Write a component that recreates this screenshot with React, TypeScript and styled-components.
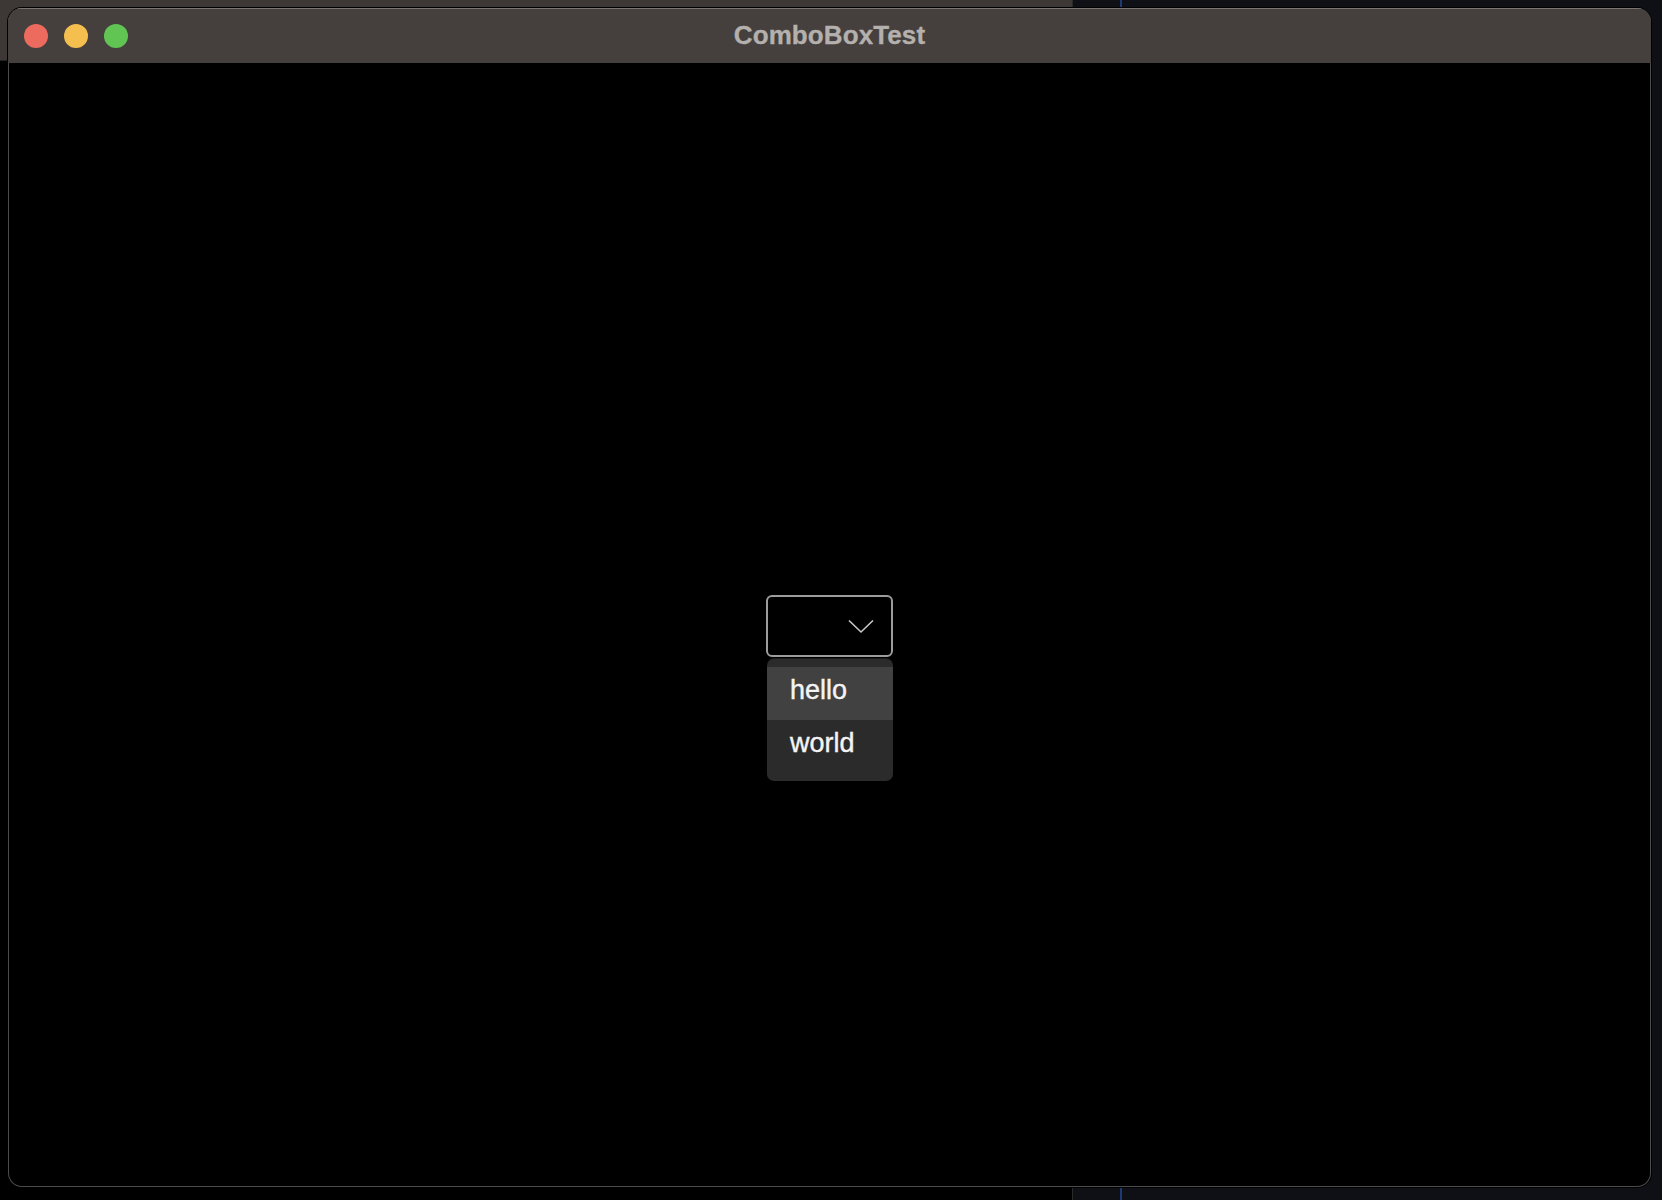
import React from 'react';
import styled, { createGlobalStyle } from 'styled-components';

const GlobalStyle = createGlobalStyle`
  html, body {
    margin: 0;
    padding: 0;
    background: #0e1016;
    overflow: hidden;
  }
  #root {
    width: 1662px;
    height: 1200px;
  }
`;

const Desktop = styled.div`
  position: relative;
  width: 1662px;
  height: 1200px;
  background: #0e1016;
  overflow: hidden;
  font-family: 'Liberation Sans', Arial, sans-serif;
`;

/* window sitting behind the active one, mostly covered */
const BackWindow = styled.div`
  position: absolute;
  left: -20px;
  top: -40px;
  width: 1092px;
  height: 1300px;
  display: flex;
  flex-direction: column;
  background: #000;
  border-right: 1px solid #2a2a2a;
  border-radius: 12px;
  overflow: hidden;
`;

const BackTitleBar = styled.div`
  height: 100px;
  background: #3d3835;
  border-bottom: 1px solid #222;
`;

const EdgeLine = styled.div`
  position: absolute;
  left: 1120px;
  top: 0;
  width: 2px;
  height: 1200px;
  background: #1d3a74;
`;

const Window = styled.div`
  position: absolute;
  left: 8px;
  top: 8px;
  width: 1643px;
  height: 1179px;
  display: flex;
  flex-direction: column;
  background: #000;
  border-radius: 14px;
  overflow: hidden;
  box-shadow: 0 0 0 1px #000, inset 0 0 0 1px #4c4c4c;
`;

const TitleBar = styled.div`
  position: relative;
  height: 55px;
  flex-shrink: 0;
  display: flex;
  align-items: center;
  justify-content: center;
  background: #45403d;
  border-top: 1px solid #7a7571;
  box-sizing: border-box;
`;

const Lights = styled.div`
  position: absolute;
  left: 16px;
  top: 15px;
  display: flex;
  gap: 16px;
`;

const Light = styled.span<{ color: string }>`
  width: 24px;
  height: 24px;
  border-radius: 50%;
  background: ${({ color }) => color};
`;

const Title = styled.div`
  font-size: 26px;
  font-weight: 700;
  color: #b4b0ad;
  letter-spacing: 0.1px;
  margin-top: -2px;
  -webkit-text-stroke: 0.3px #b4b0ad;
`;

const Content = styled.div`
  flex: 1;
  display: flex;
  align-items: center;
  justify-content: center;
`;

const ComboWrap = styled.div`
  position: relative;
  margin-top: 2px;
`;

const ComboBox = styled.div`
  width: 127px;
  height: 62px;
  box-sizing: border-box;
  border: 2px solid #9c9c9c;
  border-radius: 6px;
  background: #000;
  display: flex;
  align-items: center;
  justify-content: flex-end;
  padding-right: 17px;
`;

const Menu = styled.div`
  position: absolute;
  left: 1px;
  top: 64px;
  width: 126px;
  box-sizing: border-box;
  padding: 8px 0;
  background: #2b2b2b;
  border-radius: 7px;
  box-shadow: 0 -1px 0 #1a1a1a;
`;

const MenuItem = styled.div<{ active?: boolean }>`
  height: 53px;
  box-sizing: border-box;
  padding: 0 0 7px 23px;
  line-height: 46px;
  font-size: 27px;
  color: #f4f4f4;
  -webkit-text-stroke: 0.4px #f4f4f4;
  background: ${({ active }) => (active ? '#414141' : 'transparent')};
`;

const Chevron = () => (
  <svg width="26" height="15" viewBox="0 0 26 15" fill="none">
    <path d="M1 1.5 L13 13 L25 1.5" stroke="#c9c9c9" strokeWidth="1.6" />
  </svg>
);

const App: React.FC = () => (
  <>
    <GlobalStyle />
    <Desktop>
      <BackWindow>
        <BackTitleBar />
      </BackWindow>
      <EdgeLine />
      <Window>
        <TitleBar>
          <Lights>
            <Light color="#ed6a5e" />
            <Light color="#f5bf4f" />
            <Light color="#61c554" />
          </Lights>
          <Title>ComboBoxTest</Title>
        </TitleBar>
        <Content>
          <ComboWrap>
            <ComboBox>
              <Chevron />
            </ComboBox>
            <Menu>
              <MenuItem active>hello</MenuItem>
              <MenuItem>world</MenuItem>
            </Menu>
          </ComboWrap>
        </Content>
      </Window>
    </Desktop>
  </>
);

export default App;
